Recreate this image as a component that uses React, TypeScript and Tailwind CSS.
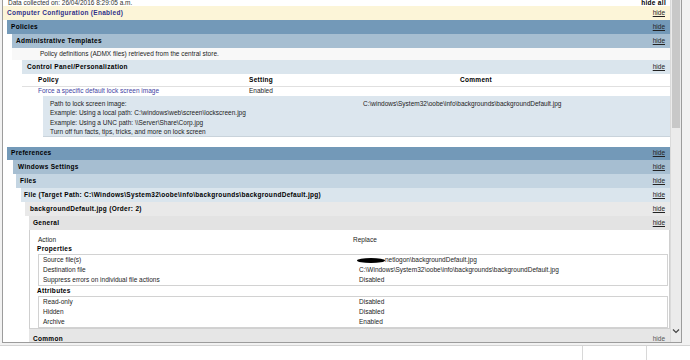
import React from 'react';

type BandProps = {
  label: string;
  bg: string;
  ml: string;
  pl: string;
  h?: string;
  color?: string;
};

function Hide({ className = '' }: { className?: string }) {
  return <span className={`underline text-[#222] ${className}`}>hide</span>;
}

function Band({ label, bg, ml, pl, h = 'h-[14px]', color = 'text-black' }: BandProps) {
  return (
    <div className={`flex justify-between items-center pr-[5px] shrink-0 ${h} ${bg} ${ml} ${pl}`}>
      <span className={`font-bold tracking-[0.3px] ${color}`}>{label}</span>
      <Hide />
    </div>
  );
}

function Row({ label, value, w = 'w-[316px]', h = 'h-[10px]' }: { label: string; value?: React.ReactNode; w?: string; h?: string }) {
  return (
    <div className={`flex items-center ${h}`}>
      <span className={`shrink-0 ${w}`}>{label}</span>
      <span>{value}</span>
    </div>
  );
}

export default function App() {
  return (
    <div className="w-[690px] h-[360px] overflow-hidden bg-white font-['Liberation_Sans',Arial,sans-serif] text-[6.5px] leading-none text-[#1c1c1c] flex flex-col">
      {/* report window */}
      <div className="flex bg-[#f2f2f2] shrink-0">
        <div className="flex h-[343px] ml-[2px] w-[680px] border-l border-b border-r border-[#9c9c9c] bg-white">
          <div className="w-[667px] flex flex-col overflow-hidden">
            {/* top line, partly scrolled off */}
            <div className="h-[6px] overflow-hidden flex justify-between pl-[5px] pr-[4px] shrink-0">
              <span className="-mt-[1.5px] leading-[8px] text-[#333]">Data collected on: 26/04/2016 8:29:05 a.m.</span>
              <span className="-mt-[1.5px] leading-[8px] font-bold tracking-[0.3px] underline text-black">hide all</span>
            </div>

            <Band label="Computer Configuration (Enabled)" bg="bg-[#fcf5d8]" ml="ml-0" pl="pl-[4px]" color="text-[#30308a]" />
            <Band label="Policies" bg="bg-[#7399b8]" ml="ml-[4px]" pl="pl-[4px]" />
            <Band label="Administrative Templates" bg="bg-[#a6bed1]" ml="ml-[9px]" pl="pl-[4px]" />
            <div className="h-[12px] ml-[9px] pl-[28px] bg-[#f8f8f8] flex items-center shrink-0">
              Policy definitions (ADMX files) retrieved from the central store.
            </div>
            <Band label="Control Panel/Personalization" bg="bg-[#dae5ed]" ml="ml-[19px]" pl="pl-[5px]" />

            {/* policy table */}
            <div className="ml-[19px] shrink-0">
              <div className="h-[13px] flex items-center pl-[16px] font-bold tracking-[0.3px] text-black border-b border-[#e0e0e0]">
                <span className="w-[211px]">Policy</span>
                <span className="w-[211px]">Setting</span>
                <span>Comment</span>
              </div>
              <div className="h-[9px] flex items-center pl-[16px]">
                <span className="w-[211px] text-[#4343a3]">Force a specific default lock screen image</span>
                <span>Enabled</span>
              </div>
              <div className="ml-[21px] bg-[#dce6ee] border-b border-[#c9d3db] pl-[7px] pt-[3px] h-[41px]">
                <Row label="Path to lock screen image:" value="C:\windows\System32\oobe\info\backgrounds\backgroundDefault.jpg" w="w-[313px]" h="h-[9.5px]" />
                <Row label="Example: Using a local path: C:\windows\web\screen\lockscreen.jpg" h="h-[9.5px]" />
                <Row label="Example: Using a UNC path: \\Server\Share\Corp.jpg" h="h-[9.5px]" />
                <Row label="Turn off fun facts, tips, tricks, and more on lock screen" h="h-[9.5px]" />
              </div>
            </div>

            <div className="h-[10px] shrink-0" />

            <Band label="Preferences" bg="bg-[#7399b8]" ml="ml-[4px]" pl="pl-[4px]" h="h-[13px]" />
            <Band label="Windows Settings" bg="bg-[#a6bed1]" ml="ml-[10px]" pl="pl-[5px]" />
            <Band label="Files" bg="bg-[#c4d5e2]" ml="ml-[13px]" pl="pl-[4px]" />
            <Band label="File (Target Path: C:\Windows\System32\oobe\info\backgrounds\backgroundDefault.jpg)" bg="bg-[#dae5ed]" ml="ml-[18px]" pl="pl-[3px]" />
            <Band label="backgroundDefault.jpg (Order: 2)" bg="bg-[#e9e9e9]" ml="ml-[22px]" pl="pl-[5px]" />
            <Band label="General" bg="bg-[#e3e3e3]" ml="ml-[26px]" pl="pl-[4px]" />

            {/* general details */}
            <div className="ml-[26px] border-l border-r border-[#cfcfcf] pt-[6px] shrink-0">
              <div className="pl-[8px]">
                <Row label="Action" value="Replace" w="w-[315px]" h="h-[9px]" />
              </div>
              <div className="h-[9px] flex items-center pl-[7px] font-bold tracking-[0.3px] text-black">Properties</div>
              <div className="ml-[8px] mr-[1px] border border-[#d2d2d2] pl-[4px]">
                <Row
                  label="Source file(s)"
                  value={
                    <span className="flex items-center">
                      <span className="inline-block w-[28px] h-[5px] bg-black rounded-[50%] -ml-[2px]" />
                      <span>netlogon\backgroundDefault.jpg</span>
                    </span>
                  }
                />
                <Row label="Destination file" value="C:\Windows\System32\oobe\info\backgrounds\backgroundDefault.jpg" />
                <Row label="Suppress errors on individual file actions" value="Disabled" />
              </div>
              <div className="h-[9px] mt-[1px] flex items-center pl-[7px] font-bold tracking-[0.3px] text-black">Attributes</div>
              <div className="ml-[8px] mr-[1px] border border-[#d2d2d2] pl-[4px]">
                <Row label="Read-only" value="Disabled" />
                <Row label="Hidden" value="Disabled" />
                <Row label="Archive" value="Enabled" />
              </div>
            </div>
            <div className="ml-[26px] h-[15px] bg-[#e6e6e6] border-t border-[#d0d0d0] flex justify-between items-end pl-[4px] pr-[5px] pb-[1px] shrink-0">
              <span className="font-bold tracking-[0.3px] text-black">Common</span>
              <span className="text-[#555]">hide</span>
            </div>
          </div>

          {/* scrollbar */}
          <div className="w-[11px] bg-[#ebebeb] border-l border-[#dadada] flex flex-col">
            <div className="h-[128px] mx-[1px] bg-[#c8c8c8]" />
            <div className="flex-1" />
            <div className="h-[14px] flex items-start justify-center">
              <svg width="8" height="6" viewBox="0 0 8 6">
                <path d="M1 1.5 L4 4.5 L7 1.5" fill="none" stroke="#444" strokeWidth="1.2" />
              </svg>
            </div>
          </div>
        </div>
      </div>

      {/* status bar */}
      <div className="h-[2px] bg-[#f2f2f2] shrink-0" />
      <div className="flex-1 flex border-t border-[#d4d4d4] bg-white">
        <div className="w-[583px] border-r border-[#d8d8d8]" />
        <div className="w-[64px] border-r border-[#d8d8d8]" />
        <div className="flex-1" />
      </div>
    </div>
  );
}
